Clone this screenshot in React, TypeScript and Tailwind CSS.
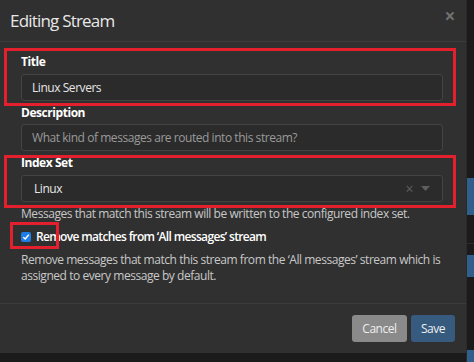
import React from "react";

function RedBox({ className }: { className: string }) {
  return <div className={"pointer-events-none absolute border-[3px] border-[#e5202e] " + className} />;
}

export default function App() {
  return (
    <div
      className="relative flex h-[362px] w-[474px] overflow-hidden bg-[#1b1b1b] text-white tracking-[-0.45px]"
      style={{ fontFamily: '"Open Sans", "Liberation Sans", sans-serif' }}
    >
      <div className="relative flex h-[353px] w-[466px] shrink-0 flex-col bg-[#303030]">
        <div className="flex h-[42px] items-center justify-between border-b border-[#3c3c3c] pl-[10px] pr-[11px]">
          <h4 className="text-[17px] tracking-[-0.8px] text-[#e8e8e8]">Editing Stream</h4>
          <span className="mb-[8px] text-[19px] font-bold leading-none text-[#707070]">×</span>
        </div>

        <div className="flex flex-1 flex-col pl-[21px] pr-[23px] pt-[12px]">
          <label className="text-[12px] font-bold leading-[16px] text-white">Title</label>
          <div className="mt-[4px] flex h-[27px] items-center rounded-[3px] border border-[#444] bg-[#2b2b2b] px-[10px] text-[12px] text-[#e6e6e6]">
            Linux Servers
          </div>

          <label className="mt-[4px] text-[12px] font-bold leading-[16px] text-white">Description</label>
          <div className="mt-[3px] flex h-[27px] items-center rounded-[3px] border border-[#444] bg-[#2b2b2b] px-[10px] text-[12px] text-[#9a9a9a]">
            What kind of messages are routed into this stream?
          </div>

          <label className="mt-[4px] text-[12px] font-bold leading-[16px] text-white">Index Set</label>
          <div className="mt-[4px] flex h-[27px] items-center justify-between rounded-[3px] border border-[#444] bg-[#2b2b2b] pl-[12px] pr-[12px] text-[12px] text-[#e6e6e6]">
            <span>Linux</span>
            <span className="flex items-center gap-[8px] text-[#5f5f5f]">
              <span className="text-[14px] leading-none">×</span>
              <svg width="9" height="5" viewBox="0 0 9 5">
                <path d="M0 0 L9 0 L4.5 5 Z" fill="#5f5f5f" />
              </svg>
            </span>
          </div>
          <p className="mt-[3px] text-[12px] leading-[17px] text-[#c8c8c8]">
            Messages that match this stream will be written to the configured index set.
          </p>

          <div className="mt-[6px] flex items-center gap-[5px]">
            <span className="flex h-[10px] w-[10px] shrink-0 items-center justify-center rounded-[2px] bg-[#1e7ee8]">
              <svg width="8" height="8" viewBox="0 0 8 8">
                <path d="M1.3 4.2 L3.2 6 L6.8 1.8" stroke="white" strokeWidth="1.4" fill="none" />
              </svg>
            </span>
            <span className="text-[12px] font-semibold tracking-[-0.65px] text-white">Remove matches from ‘All messages’ stream</span>
          </div>
          <p className="mt-[6px] text-[12px] leading-[16px] text-[#c8c8c8]">
            Remove messages that match this stream from the ‘All messages’ stream which is assigned to every message by default.
          </p>
        </div>

        <div className="flex h-[50px] items-center justify-end gap-[4px] border-t border-[#3c3c3c] pr-[11px]">
          <button className="h-[27px] w-[55px] rounded-[3px] bg-[#8a8a8a] text-[12px] text-[#eee]">Cancel</button>
          <button className="h-[27px] w-[44px] rounded-[3px] bg-[#375a7f] text-[12px] text-[#eee]">Save</button>
        </div>

        <RedBox className="left-[4px] top-[48px] h-[58px] w-[452px]" />
        <RedBox className="left-[4px] top-[155px] h-[53px] w-[452px]" />
        <RedBox className="left-[10px] top-[222px] h-[27px] w-[49px]" />
      </div>

      <div className="flex flex-1 flex-col border-l border-[#2a2a2a]">
        <div className="h-[178px]" />
        <div className="h-[37px] bg-[#2f5f8a]" />
        <div className="h-[28px]" />
        <div className="h-[12px] border-t border-[#2c2c2c]" />
        <div className="h-[22px] bg-[#2f5f8a]" />
        <div className="h-[73px]" />
        <div className="h-[12px] bg-[#2f5f8a]" />
      </div>
    </div>
  );
}
